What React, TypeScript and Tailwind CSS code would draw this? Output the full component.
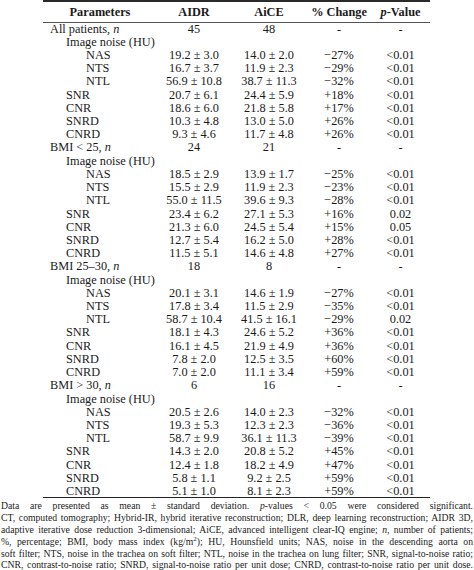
type Row = {
	label: React.ReactNode;
	level: 0 | 1 | 2;
	aidr?: string;
	aice?: string;
	change?: string;
	p?: string;
};

const group = (
	title: React.ReactNode,
	nA: string,
	nB: string,
	vals: [string, string, string, string][],
): Row[] => {
	const names = ["NAS", "NTS", "NTL", "SNR", "CNR", "SNRD", "CNRD"];
	return [
		{ label: title, level: 0, aidr: nA, aice: nB, change: "-", p: "-" },
		{ label: "Image noise (HU)", level: 1 },
		...vals.map((v, i) => ({
			label: names[i],
			level: (i < 3 ? 2 : 1) as 1 | 2,
			aidr: v[0],
			aice: v[1],
			change: v[2],
			p: v[3],
		})),
	];
};

const rows: Row[] = [
	...group(
		<>
			All patients, <i>n</i>
		</>,
		"45",
		"48",
		[
			["19.2 ± 3.0", "14.0 ± 2.0", "−27%", "<0.01"],
			["16.7 ± 3.7", "11.9 ± 2.3", "−29%", "<0.01"],
			["56.9 ± 10.8", "38.7 ± 11.3", "−32%", "<0.01"],
			["20.7 ± 6.1", "24.4 ± 5.9", "+18%", "<0.01"],
			["18.6 ± 6.0", "21.8 ± 5.8", "+17%", "<0.01"],
			["10.3 ± 4.8", "13.0 ± 5.0", "+26%", "<0.01"],
			["9.3 ± 4.6", "11.7 ± 4.8", "+26%", "<0.01"],
		],
	),
	...group(
		<>
			BMI &lt; 25, <i>n</i>
		</>,
		"24",
		"21",
		[
			["18.5 ± 2.9", "13.9 ± 1.7", "−25%", "<0.01"],
			["15.5 ± 2.9", "11.9 ± 2.3", "−23%", "<0.01"],
			["55.0 ± 11.5", "39.6 ± 9.3", "−28%", "<0.01"],
			["23.4 ± 6.2", "27.1 ± 5.3", "+16%", "0.02"],
			["21.3 ± 6.0", "24.5 ± 5.4", "+15%", "0.05"],
			["12.7 ± 5.4", "16.2 ± 5.0", "+28%", "<0.01"],
			["11.5 ± 5.1", "14.6 ± 4.8", "+27%", "<0.01"],
		],
	),
	...group(
		<>
			BMI 25–30, <i>n</i>
		</>,
		"18",
		"8",
		[
			["20.1 ± 3.1", "14.6 ± 1.9", "−27%", "<0.01"],
			["17.8 ± 3.4", "11.5 ± 2.9", "−35%", "<0.01"],
			["58.7 ± 10.4", "41.5 ± 16.1", "−29%", "0.02"],
			["18.1 ± 4.3", "24.6 ± 5.2", "+36%", "<0.01"],
			["16.1 ± 4.5", "21.9 ± 4.9", "+36%", "<0.01"],
			["7.8 ± 2.0", "12.5 ± 3.5", "+60%", "<0.01"],
			["7.0 ± 2.0", "11.1 ± 3.4", "+59%", "<0.01"],
		],
	),
	...group(
		<>
			BMI &gt; 30, <i>n</i>
		</>,
		"6",
		"16",
		[
			["20.5 ± 2.6", "14.0 ± 2.3", "−32%", "<0.01"],
			["19.3 ± 5.3", "12.3 ± 2.3", "−36%", "<0.01"],
			["58.7 ± 9.9", "36.1 ± 11.3", "−39%", "<0.01"],
			["14.3 ± 2.0", "20.8 ± 5.2", "+45%", "<0.01"],
			["12.4 ± 1.8", "18.2 ± 4.9", "+47%", "<0.01"],
			["5.8 ± 1.1", "9.2 ± 2.5", "+59%", "<0.01"],
			["5.1 ± 1.0", "8.1 ± 2.3", "+59%", "<0.01"],
		],
	),
];

const indent = ["pl-[7px]", "pl-[23px]", "pl-[43px]"];

const notes: React.ReactNode[] = [
	<>
		Data are presented as mean ± standard deviation. <i>p</i>-values &lt; 0.05 were considered significant.
	</>,
	<>
		CT, computed tomography; Hybrid-IR, hybrid iterative reconstruction; DLR, deep learning reconstruction; AIDR 3D,
	</>,
	<>
		adaptive iterative dose reduction 3-dimensional; AiCE, advanced intelligent clear-IQ engine; <i>n</i>, number of patients;
	</>,
	<>
		%, percentage; BMI, body mass index (kg/m<sup className="text-[7px]">2</sup>); HU, Hounsfield units; NAS, noise in the descending aorta on
	</>,
	<>soft filter; NTS, noise in the trachea on soft filter; NTL, noise in the trachea on lung filter; SNR, signal-to-noise ratio;</>,
	<>CNR, contrast-to-noise ratio; SNRD, signal-to-noise ratio per unit dose; CNRD, contrast-to-noise ratio per unit dose.</>,
];

export default function App(): JSX.Element {
	return (
		<div className="w-[474px] h-[570px] overflow-hidden bg-white text-[#1a1a1a] font-['Liberation_Serif',serif]">
			<table className="ml-[43px] w-[387px] table-fixed border-collapse text-[12.3px] leading-none">
				<colgroup>
					<col className="w-[114px]" />
					<col className="w-[74px]" />
					<col className="w-[76px]" />
					<col className="w-[64px]" />
					<col className="w-[59px]" />
				</colgroup>
				<thead>
					<tr className="h-[21px] border-t-2 border-t-[#2a2a2a] border-b border-b-[#555]">
						<th className="font-bold text-center">Parameters</th>
						<th className="font-bold text-center">AIDR</th>
						<th className="font-bold text-center">AiCE</th>
						<th className="font-bold text-center">% Change</th>
						<th className="font-bold text-center">
							<i>p</i>-Value
						</th>
					</tr>
				</thead>
				<tbody className="border-b border-b-[#222]">
					{rows.map((r, i) => (
						<tr key={i} className="h-[13.23px]">
							<td className={`${indent[r.level]} whitespace-nowrap`}>{r.label}</td>
							<td className="text-center whitespace-nowrap">{r.aidr}</td>
							<td className="text-center whitespace-nowrap">{r.aice}</td>
							<td className="text-center whitespace-nowrap">{r.change}</td>
							<td className="text-center whitespace-nowrap">{r.p}</td>
						</tr>
					))}
				</tbody>
			</table>
			<div className="mt-[2px] px-[1px] text-[9.7px] leading-[11.8px]">
				{notes.map((n, i) => (
					<div key={i} className="text-justify [text-align-last:justify] whitespace-nowrap">
						{n}
					</div>
				))}
			</div>
		</div>
	);
}
